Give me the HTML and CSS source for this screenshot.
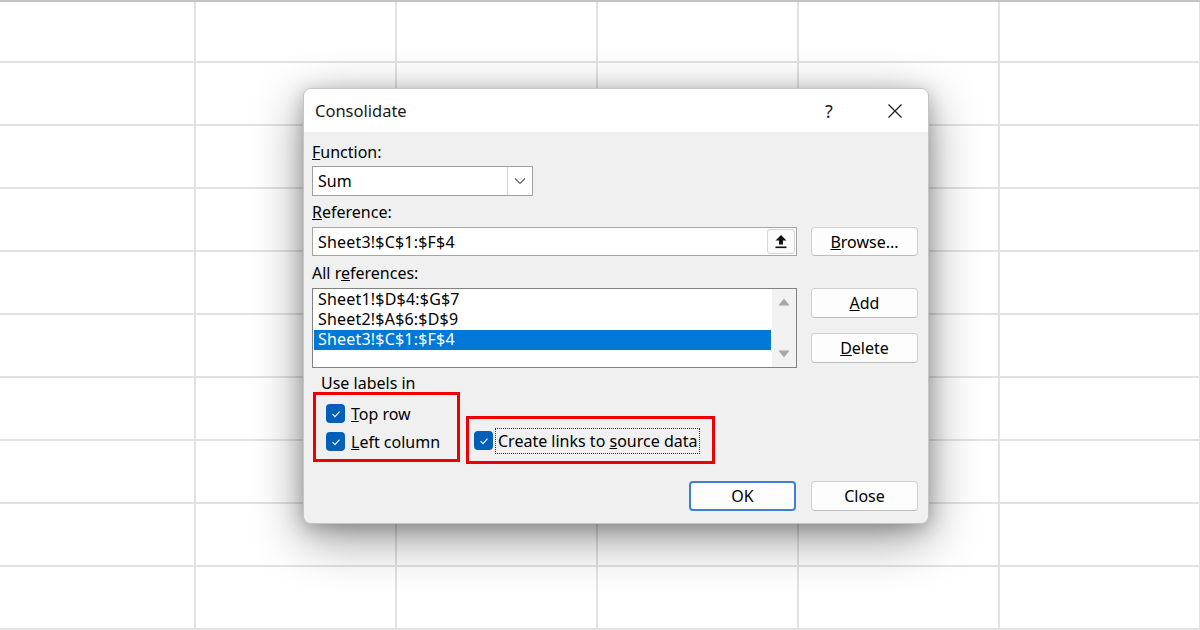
FILE: index.html
```html
<!DOCTYPE html>
<html lang="en">
<head>
    <meta charset="UTF-8">
    <meta name="viewport" content="width=device-width, initial-scale=1.0">
    <title>Consolidate</title>
    <link rel="stylesheet" href="styles.css">
</head>
<body>
    <div class="sheet">
        <div class="dialog">
            <div class="titlebar">
                <span class="title">Consolidate</span>
                <span class="tb-btn help">?</span>
                <span class="tb-btn">
                    <svg width="16" height="16" viewBox="0 0 16 16"><path d="M1.5 1.5 L14.5 14.5 M14.5 1.5 L1.5 14.5" stroke="#222" stroke-width="1.3" fill="none"/></svg>
                </span>
            </div>

            <div class="content">
                <div class="lbl"><u>F</u>unction:</div>
                <div class="select">
                    <span class="select-value">Sum</span>
                    <span class="select-arrow">
                        <svg width="12" height="8" viewBox="0 0 12 8"><polyline points="1,1.5 6,6.5 11,1.5" stroke="#666" stroke-width="1.2" fill="none"/></svg>
                    </span>
                </div>

                <div class="lbl lbl-ref"><u>R</u>eference:</div>
                <div class="row">
                    <div class="ref-input">
                        <span class="ref-value">Sheet3!$C$1:$F$4</span>
                        <span class="collapse-btn">
                            <svg width="14" height="15" viewBox="0 0 14 15"><path d="M7 1 L12.5 6.5 H9 V10.5 H5 V6.5 H1.5 Z" fill="#111"/><rect x="1.5" y="12.5" width="11" height="1.6" fill="#111"/></svg>
                        </span>
                    </div>
                    <button class="btn"><u>B</u>rowse...</button>
                </div>

                <div class="lbl lbl-all">All r<u>e</u>ferences:</div>
                <div class="row">
                    <div class="listbox">
                        <div class="list-items">
                            <div class="item">Sheet1!$D$4:$G$7</div>
                            <div class="item">Sheet2!$A$6:$D$9</div>
                            <div class="item selected">Sheet3!$C$1:$F$4</div>
                        </div>
                        <div class="scrollbar">
                            <svg width="12" height="8" viewBox="0 0 12 8"><path d="M6 0.5 L11.5 7.5 H0.5 Z" fill="#a6a6a6"/></svg>
                            <svg width="12" height="8" viewBox="0 0 12 8"><path d="M6 7.5 L11.5 0.5 H0.5 Z" fill="#a6a6a6"/></svg>
                        </div>
                    </div>
                    <div class="btn-col">
                        <button class="btn btn-tall"><u>A</u>dd</button>
                        <button class="btn btn-tall"><u>D</u>elete</button>
                    </div>
                </div>

                <div class="group-legend">Use labels in</div>
                <div class="options">
                    <div class="mark mark-labels">
                        <div class="check-row">
                            <span class="checkbox"><svg width="12" height="10" viewBox="0 0 12 10"><polyline points="2.5,5.2 5,7.6 9.5,2.6" stroke="#fff" stroke-width="1.1" fill="none"/></svg></span>
                            <span><u>T</u>op row</span>
                        </div>
                        <div class="check-row">
                            <span class="checkbox"><svg width="12" height="10" viewBox="0 0 12 10"><polyline points="2.5,5.2 5,7.6 9.5,2.6" stroke="#fff" stroke-width="1.1" fill="none"/></svg></span>
                            <span><u>L</u>eft column</span>
                        </div>
                    </div>
                    <div class="mark mark-links">
                        <div class="check-row">
                            <span class="checkbox"><svg width="12" height="10" viewBox="0 0 12 10"><polyline points="2.5,5.2 5,7.6 9.5,2.6" stroke="#fff" stroke-width="1.1" fill="none"/></svg></span>
                            <span class="focus">Create links to <u>s</u>ource data</span>
                        </div>
                    </div>
                </div>

                <div class="footer">
                    <button class="btn btn-tall btn-default">OK</button>
                    <button class="btn btn-tall">Close</button>
                </div>
            </div>
        </div>
    </div>
</body>
</html>
```

FILE: styles.css
```css
html, body {
    margin: 0;
    padding: 0;
}

body {
    font-family: "Noto Sans", "Open Sans", sans-serif;
    font-size: 16px;
    color: #000;
    background-color: #ffffff;
}

/* spreadsheet behind the dialog */
.sheet {
    position: relative;
    width: 1200px;
    height: 630px;
    overflow: hidden;
    border-top: 2px solid #c4c4c4;
    box-sizing: border-box;
    background-color: #ffffff;
    background-image:
        linear-gradient(to right, transparent 199px, #e2e2e2 199px, #e2e2e2 201px),
        linear-gradient(to bottom, transparent 61px, #e2e2e2 61px, #e2e2e2 63px);
    background-size: 201px 63px;
    background-position: -5px -2px;
}

.dialog {
    position: absolute;
    left: 303px;
    top: 86px;
    width: 626px;
    height: 436px;
    box-sizing: border-box;
    border: 1px solid #c4c4c4;
    border-radius: 8px;
    background-color: #f0f0f0;
    overflow: hidden;
    box-shadow: 0 14px 50px rgba(0, 0, 0, 0.42), 0 4px 18px rgba(0, 0, 0, 0.22);
}

.titlebar {
    height: 43px;
    background-color: #ffffff;
    display: flex;
    align-items: center;
    padding-left: 11px;
}

.title {
    flex: 1;
    font-size: 16.5px;
    color: #1a1a1a;
}

.tb-btn {
    width: 66px;
    height: 43px;
    display: flex;
    align-items: center;
    justify-content: center;
    font-size: 18px;
    color: #222;
}

.content {
    padding: 10px 10px 0 8px;
}

.lbl {
    line-height: 20px;
    height: 20px;
}

.lbl-ref {
    margin-top: 6px;
}

.lbl-all {
    margin-top: 7px;
}

.select {
    margin-top: 4px;
    width: 221px;
    height: 30px;
    box-sizing: border-box;
    border: 1px solid #a0a0a0;
    background-color: #ffffff;
    display: flex;
}

.select-value {
    flex: 1;
    padding-left: 5px;
    line-height: 28px;
}

.select-arrow {
    width: 24px;
    border-left: 1px solid #d4d4d4;
    display: flex;
    align-items: center;
    justify-content: center;
}

.row {
    margin-top: 5px;
    display: flex;
    align-items: flex-start;
    gap: 14px;
}

.ref-input {
    width: 485px;
    height: 29px;
    box-sizing: border-box;
    border: 1px solid #a5a5a5;
    background-color: #ffffff;
    display: flex;
    align-items: center;
}

.ref-value {
    flex: 1;
    padding-left: 5px;
    letter-spacing: 0.2px;
}

.collapse-btn {
    width: 28px;
    height: 25px;
    margin-right: 1px;
    box-sizing: border-box;
    border: 1px solid #d6d6d6;
    border-radius: 3px;
    background-color: #fafafa;
    display: flex;
    align-items: center;
    justify-content: center;
}

.btn {
    width: 107px;
    height: 29px;
    box-sizing: border-box;
    border: 1px solid #d0d0d0;
    border-bottom-color: #bcbcbc;
    border-radius: 4px;
    background-color: #fdfdfd;
    font-family: inherit;
    font-size: 16px;
    color: #000;
    padding: 0;
}

.btn-tall {
    height: 30px;
}

.btn-default {
    border: 2px solid #3f7fd2;
}

.listbox {
    width: 485px;
    height: 80px;
    box-sizing: border-box;
    border: 1px solid #828282;
    background-color: #ffffff;
    display: flex;
}

.list-items {
    flex: 1;
    padding: 1px 1px 0 1px;
}

.item {
    height: 20px;
    line-height: 19px;
    padding-left: 4px;
    letter-spacing: 0.2px;
}

.item.selected {
    background-color: #0078d7;
    color: #ffffff;
}

.scrollbar {
    width: 24px;
    background-color: #f2f2f2;
    display: flex;
    flex-direction: column;
    align-items: center;
    justify-content: space-between;
    padding: 9px 0 9px;
}

.btn-col {
    display: flex;
    flex-direction: column;
    gap: 15px;
}

.group-legend {
    margin-top: 6px;
    margin-left: 9px;
    height: 18px;
    line-height: 18px;
}

.options {
    display: flex;
    align-items: flex-start;
    gap: 6px;
    margin-left: 1px;
}

/* red annotation frames */
.mark {
    border: 3px solid #ee0000;
    box-sizing: border-box;
}

.mark-labels {
    width: 147px;
    height: 70px;
    padding: 9px 0 0 10px;
    display: flex;
    flex-direction: column;
    gap: 9px;
}

.mark-links {
    margin-top: 24px;
    width: 249px;
    height: 48px;
    padding: 12px 0 0 5px;
}

.check-row {
    display: flex;
    align-items: center;
    gap: 6px;
    height: 19px;
    white-space: nowrap;
}

.checkbox {
    flex: none;
    width: 19px;
    height: 19px;
    border-radius: 4px;
    background-color: #005fb8;
    display: flex;
    align-items: center;
    justify-content: center;
}

.focus {
    outline: 1px dotted #333;
    outline-offset: 1px;
    padding: 0 1px;
    margin-left: -2px;
}

.footer {
    margin-top: 17px;
    display: flex;
    justify-content: flex-end;
    gap: 15px;
}
```
